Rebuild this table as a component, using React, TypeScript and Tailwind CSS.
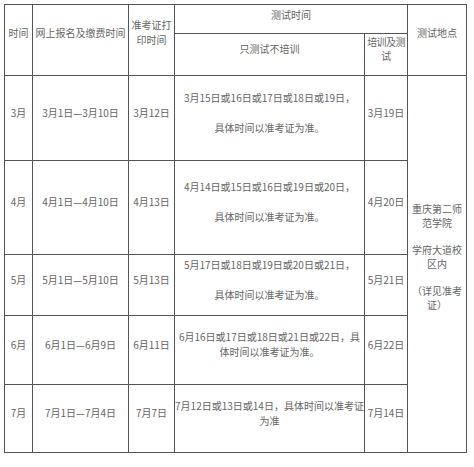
import React from "react";

const rows = [
  {
    m: "3月",
    reg: "3月1日—3月10日",
    print: "3月12日",
    test: [["3月15日或16日或17日或18日或19日，"], ["具体时间以准考证为准。"]],
    train: "3月19日",
    h: "h-[85px]",
  },
  {
    m: "4月",
    reg: "4月1日—4月10日",
    print: "4月13日",
    test: [["4月14日或15日或16日或19日或20日，"], ["具体时间以准考证为准。"]],
    train: "4月20日",
    h: "h-[94px]",
  },
  {
    m: "5月",
    reg: "5月1日—5月10日",
    print: "5月13日",
    test: [["5月17日或18日或19日或20日或21日，"], ["具体时间以准考证为准。"]],
    train: "5月21日",
    h: "h-[61px]",
  },
  {
    m: "6月",
    reg: "6月1日—6月9日",
    print: "6月11日",
    test: [["6月16日或17日或18日或21日或22日，具", "体时间以准考证为准。"]],
    train: "6月22日",
    h: "h-[69px]",
  },
  {
    m: "7月",
    reg: "7月1日—7月4日",
    print: "7月7日",
    test: [["7月12日或13日或14日，具体时间以准考证", "为准"]],
    train: "7月14日",
    h: "h-[68px]",
  },
];

const td = "border border-[#555] text-center align-middle p-0";

export default function App() {
  return (
    <div
      className="w-[474px] h-[467px] bg-white text-[#666] text-[10px] leading-[15px]"
      style={{ fontFamily: '"Noto Sans CJK SC", "Noto Sans", sans-serif' }}
    >
      <table className="table-fixed border-collapse ml-[4px] mt-[4px] w-[462px]">
        <colgroup>
          <col className="w-[28px]" />
          <col className="w-[96px]" />
          <col className="w-[46px]" />
          <col className="w-[190px]" />
          <col className="w-[43px]" />
          <col className="w-[59px]" />
        </colgroup>
        <tbody>
          <tr className="h-[29px]">
            <td rowSpan={2} className={td}>
              <div className="pb-4">时间</div>
            </td>
            <td rowSpan={2} className={td}>
              <div className="pb-4 whitespace-nowrap">网上报名及缴费时间</div>
            </td>
            <td rowSpan={2} className={td}>
              <div className="pb-4">
                准考证打
                <br />
                印时间
              </div>
            </td>
            <td colSpan={2} className={td}>
              <div className="pb-[10px]">测试时间</div>
            </td>
            <td rowSpan={2} className={td}>
              <div className="pb-4">测试地点</div>
            </td>
          </tr>
          <tr className="h-[42px]">
            <td className={td}>
              <div className="pb-[12px]">只测试不培训</div>
            </td>
            <td className={td}>
              <div className="pb-[12px] leading-[14px] tracking-[-0.6px] whitespace-nowrap">
                培训及测
                <br />
                试
              </div>
            </td>
          </tr>
          {rows.map((r, i) => (
            <tr key={r.m} className={r.h}>
              <td className={td}>
                <div className="pb-3">{r.m}</div>
              </td>
              <td className={td}>
                <div className="pb-3 whitespace-nowrap">{r.reg}</div>
              </td>
              <td className={td}>
                <div className="pb-3">{r.print}</div>
              </td>
              <td className={td}>
                <div className="pb-3 flex flex-col items-center gap-[15px] whitespace-nowrap">
                  {r.test.map((p, j) => (
                    <p key={j}>
                      {p.map((l, k) => (
                        <span key={k} className="block">
                          {l}
                        </span>
                      ))}
                    </p>
                  ))}
                </div>
              </td>
              <td className={td}>
                <div className="pb-3">{r.train}</div>
              </td>
              {i === 0 && (
                <td rowSpan={5} className={td}>
                  <div className="pb-[14px] flex flex-col gap-[13px] leading-[14px]">
                    <p>
                      重庆第二师
                      <br />
                      范学院
                    </p>
                    <p>
                      学府大道校
                      <br />
                      区内
                    </p>
                    <p>
                      （详见准考
                      <br />
                      证）
                    </p>
                  </div>
                </td>
              )}
            </tr>
          ))}
        </tbody>
      </table>
    </div>
  );
}
